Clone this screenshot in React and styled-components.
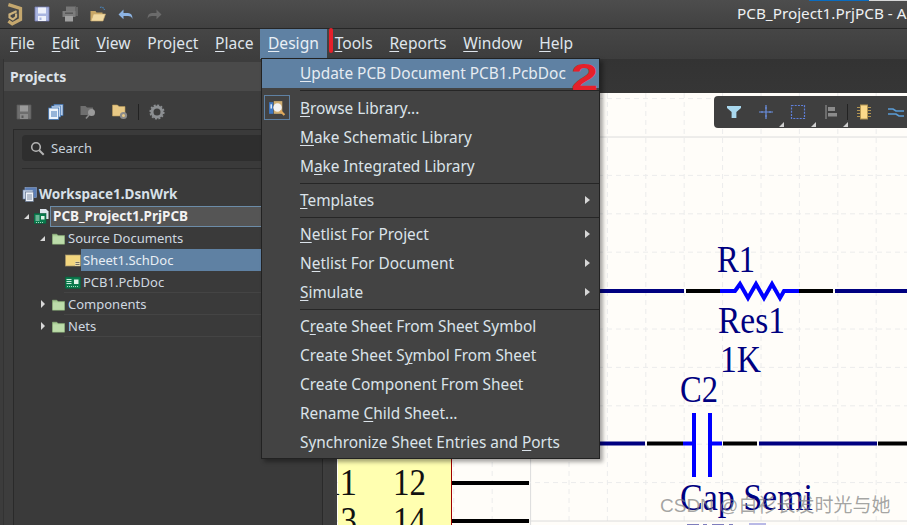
import React from "react";
import styled, { createGlobalStyle } from "styled-components";

const Global = createGlobalStyle`
  html, body { margin: 0; padding: 0; background: #3c3c3c; }
  * { box-sizing: border-box; }
  u { text-decoration-thickness: 1px; text-underline-offset: 2px; }
`;
const FONT = `"Noto Sans", "Open Sans", "Liberation Sans", sans-serif`;

const Page = styled.div`
  position: relative; width: 907px; height: 525px; overflow: hidden;
  display: flex; flex-direction: column; background: #3c3c3c;
  font-family: ${FONT}; color: #dfe5ec;
`;
const TitleBar = styled.header`
  position: relative; height: 29px; flex: none; display: flex; align-items: center;
  padding-left: 6px; gap: 12px; border-bottom: 1px solid #262626;
  background: linear-gradient(#4d4d4d, #414141);
`;
const Progress = styled.div`
  position: absolute; top: 0; right: 0; width: 98px; height: 1px;
  background: linear-gradient(90deg, #0a6cc0 61%, #d8d8d8 61%);
`;
const Slot = styled.span`
  width: 16px; height: 16px; flex: none; display: block;
  svg { display: block; width: 100%; height: 100%; overflow: visible; }
`;
const Title = styled.div`
  position: absolute; left: 737px; top: 3px; font-size: 15.3px; white-space: nowrap; color: #eef0f2;
`;
const MenuBar = styled.nav`
  height: 30px; flex: none; display: flex; padding-left: 1.6px;
  background: linear-gradient(#464646, #3d3d3d);
`;
const MenuItem = styled.div`
  height: 30px; padding: 0 8.4px; font-size: 15.6px; line-height: 29px; white-space: nowrap;
  background: ${p => (p.$active ? "#5f81a3" : "transparent")};
  ${p => p.$active && "margin: 0 -1px 0 -2px; padding-left: 8px; color:#e9eff5;"}
`;
const Body = styled.div`flex: 1; display: flex; min-height: 0;`;
const Panel = styled.aside`
  width: 322px; flex: none; margin-left: 3px; display: flex; flex-direction: column;
  border-left: 1px solid #333; border-right: 2px solid #3e3e3e; background: #3d3d3d;
  padding-top: 3px;
`;
const PanelHead = styled.div`
  height: 29px; flex: none; background: #4a4a4a; padding-left: 6px;
  font-size: 14px; font-weight: 700; line-height: 30px; color: #dde3e9;
`;
const PanelTools = styled.div`
  height: 38px; flex: none; display: flex; align-items: center; padding: 4px 0 0 12px; gap: 16px;
`;
const ToolSep = styled.span`width: 1px; height: 16px; background: #222; margin: 0 -6px;`;
const Frame = styled.div`
  flex: 1; margin-left: 9px; padding: 5px 0 0 8px; background: #3a3a3a;
  border-left: 1px solid #2a2a2a; border-top: 1px solid #2a2a2a; border-right: 1px solid #2a2a2a;
`;
const Search = styled.div`
  height: 26px; display: flex; align-items: center; gap: 6px; padding-left: 8px;
  background: #2e2e2e; border-radius: 4px; font-size: 13px; color: #c8d2dc;
  svg { width: 15px; height: 15px; }
`;
const Rule = styled.div`height: 1px; background: #2c2c2c; margin: 7px 0 14px;`;
const Tree = styled.div`display: flex; flex-direction: column;`;
const Row = styled.div`
  position: relative; height: 22px; display: flex; align-items: center; padding-left: ${p => p.$indent}px;
  font-size: 13px; white-space: nowrap; color: #cfd8e0;
  ${p => p.$rule && `&::after { content: ""; position: absolute; left: 42px; right: 0; bottom: 0; height: 1px; background: #444; }`}
`;
const Arrow = styled.span`
  width: 0; height: 0; flex: none; margin-right: ${p => p.$mr ?? 5}px;
  ${p => p.$open
    ? "border-left: 5px solid transparent; border-bottom: 5px solid #d8d8d8;"
    : "border-left: 4px solid #d8d8d8; border-top: 4px solid transparent; border-bottom: 4px solid transparent;"}
`;
const TreeIcon = styled.span`
  width: ${p => p.$w ?? 15}px; height: 15px; flex: none; display: block; margin-right: ${p => p.$mr ?? 2}px;
  svg { width: 100%; height: 100%; display: block; }
`;
const Bold = styled.span`font-weight: 700; font-size: 13.5px; color: #d7e0e8;`;
const ProjName = styled.span`
  flex: 1; height: 21px; padding-left: 2px; line-height: 19px; font-weight: 700; font-size: 13.5px; color: #f2f2f2;
  background: #555; border: 1px solid #6c8ca8; border-right: 0;
`;
const SelName = styled.span`
  flex: 1; height: 22px; padding-left: 2px; line-height: 22px; background: #5f81a3; color: #e8eef4;
`;
const Doc = styled.main`flex: 1; display: flex; flex-direction: column; min-width: 0;`;
const Tabs = styled.div`height: 34px; flex: none; background: linear-gradient(#333, #363636);`;
const DocRow = styled.div`flex: 1; display: flex; min-height: 0;`;
const Strip = styled.div`width: 12px; flex: none; background: #3d3d3d; border-right: 3px solid #3f3f3f;`;
const Canvas = styled.section`position: relative; flex: 1; background: #fffdf9; overflow: hidden;`;
const Sheet = styled.svg`
  position: absolute; left: 0; top: 0; width: 570px; height: 432px; display: block;
  font-family: "Liberation Serif", serif;
`;
const Watermark = styled.div`
  position: absolute; left: 323px; top: 400px; font-size: 19px; line-height: 26px; white-space: nowrap;
  font-family: "Liberation Sans", "Noto Sans CJK SC", sans-serif; color: rgba(125,125,125,.7);
`;
const FloatBar = styled.div`
  position: absolute; left: 377px; top: 3px; width: 220px; height: 32px; display: flex; align-items: center;
  padding-left: 12px; gap: 16px; background: #3f3f3f; border-radius: 4px;
`;
const FloatTool = styled.span`
  position: relative; width: 16px; height: 16px; flex: none; display: block;
  svg { width: 100%; height: 100%; display: block; }
  ${p => p.$corner && `&::after { content: ""; position: absolute; right: -10px; bottom: -7px; width: 0; height: 0;
    border-left: 5px solid transparent; border-bottom: 5px solid #cfcfcf; }`}
`;
const FloatSep = styled.span`width: 1px; height: 16px; background: #222; margin: 0 -8px 0 -7px;`;

const Menu = styled.div`
  position: absolute; left: 261px; top: 58px; width: 339px; padding: 0 0 1px; background: #434343;
  border: 1px solid #222; box-shadow: 3px 3px 4px rgba(0,0,0,.35);
`;
const MRow = styled.div`
  position: relative; height: 29px; padding-left: 38px; font-size: 15.4px; line-height: 30px; white-space: nowrap;
  color: #dbe3ea; background: ${p => (p.$hot ? "#5f81a3" : "transparent")};
  ${p => p.$hot && "color:#e6ecf2;"}
`;
const MSep = styled.div`
  height: ${p => (p.$first ? 6 : 5)}px; padding-top: 2px;
  &::after { content: ""; display: block; margin-left: 38px; height: 1px; background: #262626; }
`;
const Sub = styled.span`
  position: absolute; right: 9px; top: 10px; width: 0; height: 0;
  border-left: 5px solid #d6d6d6; border-top: 4.5px solid transparent; border-bottom: 4.5px solid transparent;
`;
const BrowseIcon = styled.span`
  position: absolute; left: 2px; top: 1px; width: 26px; height: 25px; display: flex; align-items: center; justify-content: center;
  border: 1px solid #5f81a3;
  svg { width: 18px; height: 18px; }
`;
const RedOne = styled.div`position: absolute; left: 329px; top: 28px; width: 4px; height: 25px; border-radius: 2px; background: #e6202a;`;
const RedTwo = styled.div`
  position: absolute; left: 571px; top: 58px; font-family: "Liberation Sans", sans-serif; font-size: 36px; line-height: 40px; font-weight: 700;
  color: #e6202a; transform: scaleX(1.35); transform-origin: left center;
`;

function Label({ s }) {
  const i = s.indexOf("&");
  if (i < 0) return s;
  return <>{s.slice(0, i)}<u>{s[i + 1]}</u>{s.slice(i + 2)}</>;
}

const Floppy = ({ c = "#a9b5e0", b = "#eef1fb" }) => (
  <svg viewBox="0 0 16 16"><path d="M1 1h14v14H1z" fill={c} stroke="#7a7fb5" strokeWidth=".8"/><rect x="4" y="1.5" width="8" height="6" fill={b}/><rect x="4" y="10" width="8" height="5" fill={b}/><rect x="5.5" y="11.5" width="2" height="2.5" fill={c}/></svg>
);
const GFloppy = () => (
  <svg viewBox="0 0 16 16"><path d="M1 1h14v14H1z" fill="#6e6e6e" stroke="#5a5a5a" strokeWidth=".8"/><rect x="4" y="1.5" width="8" height="6" fill="#9a9a9a"/><rect x="4" y="10" width="8" height="5" fill="#8c8c8c"/><rect x="5.5" y="11.5" width="2" height="2.5" fill="#5a5a5a"/></svg>
);
const Logo = () => (
  <svg viewBox="0 0 16 20" style={{ height: 22, width: 18, marginTop: -3 }}>
    <path d="M2 1.5L13 5v10l-7.5 4L2 16.5" fill="none" stroke="#c4a76e" strokeWidth="3"/>
    <path d="M9.5 7.5L3 10.5v2.5l3 2 3-2.5V9.5" fill="none" stroke="#cdb27c" strokeWidth="2"/>
  </svg>
);
const Print = () => (
  <svg viewBox="0 0 16 16"><rect x="4" y="0.5" width="10" height="5" fill="#777"/><rect x="13" y="1" width="3" height="9" fill="#666"/><rect x="0.5" y="5" width="13" height="6" fill="#7d7d7d"/><rect x="3" y="10" width="8" height="5.5" fill="#a0a0a0"/><rect x="3" y="6.5" width="8" height="1.4" fill="#555"/></svg>
);
const OpenFolder = () => (
  <svg viewBox="0 0 16 16"><path d="M0.5 5h5l1 1.5h6v2H3.5L1.5 15h-1z" fill="#c8a767"/><path d="M3.5 8h12l-2.5 7H1z" fill="#f0d9a2" stroke="#c9aa6d" strokeWidth=".6"/><path d="M10 1.5c2-1 4 .5 4.5 2.5" fill="none" stroke="#4a83b8" strokeWidth="1.2" strokeDasharray="1.6 .8"/></svg>
);
const Undo = ({ c }) => (
  <svg viewBox="0 0 16 16"><path d="M5.5 7H10c3 0 4.5 2 4.5 6-1-2.4-2.5-3-4.5-3H5.5v3.2L.5 8.4l5-5z" fill={c}/></svg>
);
const Redo = ({ c }) => (
  <svg viewBox="0 0 16 16" style={{ transform: "scaleX(-1)" }}><path d="M5.5 7H10c3 0 4.5 2 4.5 6-1-2.4-2.5-3-4.5-3H5.5v3.2L.5 8.4l5-5z" fill={c}/></svg>
);
const Docs = () => (
  <svg viewBox="0 0 16 16"><rect x="6" y="0.5" width="9" height="11" fill="#b9cde6" stroke="#3f74b5" strokeWidth=".7"/><rect x="3.5" y="2" width="9" height="11" fill="#d4e2f3" stroke="#3f74b5" strokeWidth=".7"/><rect x="0.7" y="4" width="10" height="11.5" fill="#eef4fb" stroke="#3f74b5" strokeWidth=".8"/><path d="M3 8h6M3 10h6M3 12h6" stroke="#3f74b5"/></svg>
);
const FolderSearch = () => (
  <svg viewBox="0 0 16 16"><path d="M0.5 2h5l1.5 1.5h6V11H.5z" fill="#6f6f6f"/><circle cx="11.5" cy="8.5" r="3.5" fill="#9a9a9a"/><path d="M9 11l-3 3.5" stroke="#8a8a8a" strokeWidth="1.6"/></svg>
);
const FolderGear = () => (
  <svg viewBox="0 0 16 16"><path d="M0.5 1h5l1.5 1.5h6V12H.5z" fill="#e8c985" stroke="#b99a5c" strokeWidth=".6"/><circle cx="11.5" cy="11.5" r="3.6" fill="#8b8b8b"/><circle cx="11.5" cy="11.5" r="1.5" fill="#e8c985"/></svg>
);
const Gear = () => (
  <svg viewBox="0 0 16 16"><circle cx="8" cy="8" r="5" fill="none" stroke="#8c8f92" strokeWidth="3"/><circle cx="8" cy="8" r="6.8" fill="none" stroke="#8c8f92" strokeWidth="1.6" strokeDasharray="2 1.56"/></svg>
);
const Mag = () => (
  <svg viewBox="0 0 15 15"><circle cx="6" cy="6" r="4.3" fill="none" stroke="#b4b4b4" strokeWidth="1.6"/><path d="M9.2 9.2l4.5 4.5" stroke="#b4b4b4" strokeWidth="2"/></svg>
);
const Workspace = () => (
  <svg viewBox="0 0 15 15"><rect x="3" y="0.5" width="11.5" height="10" fill="#5c7fb8" stroke="#8ea6cc" strokeWidth=".6"/><rect x="1" y="3" width="10" height="9" fill="#c6d3e6" stroke="#6d86ae" strokeWidth=".6"/><rect x="3.5" y="5" width="8" height="9.5" fill="#eef2f8" stroke="#60738f" strokeWidth=".7"/><path d="M5 8h5M5 10h5M5 12h5" stroke="#60738f" strokeWidth=".8"/></svg>
);
const ProjIcon = () => (
  <svg viewBox="0 0 15 15"><path d="M6 0h6l2.5 2.5V10H6z" fill="#dfe6ee"/><rect x="0" y="4.5" width="12" height="10" fill="#0a7a4d" stroke="#0c5d3c" strokeWidth=".6"/><path d="M1.5 7h4M1.5 9h4M1.5 11h4" stroke="#c9eedd"/><rect x="7" y="7" width="3.5" height="3.5" fill="#dff5ea"/><path d="M2 13.5h8" stroke="#a5dcc2" strokeDasharray="1 1"/></svg>
);
const Folder = () => (
  <svg viewBox="0 0 15 15"><path d="M0.5 2.5h5L7 4h7.5v10H.5z" fill="#a9ce96" stroke="#8eb57c" strokeWidth=".6"/><rect x="1" y="5" width="13" height="8.5" fill="#bcdcaa"/></svg>
);
const SchIcon = () => (
  <svg viewBox="0 0 16 15"><rect x="0.5" y="2" width="15" height="11" fill="#f3d67e" stroke="#a5956a" strokeWidth=".7"/><path d="M10 8.5h5v4.5h-5z" fill="#eadba9"/><path d="M10.5 9.5h4M10.5 11.5h4" stroke="#555" strokeWidth=".8"/></svg>
);
const PcbIcon = () => (
  <svg viewBox="0 0 16 15"><rect x="0.3" y="2" width="15.4" height="11.5" fill="#0b7a4d" stroke="#0b5c3a" strokeWidth=".6"/><path d="M1.5 4.5h5M1.5 6.5h5M1.5 8.5h5" stroke="#c9eedd"/><rect x="9" y="4.5" width="4.5" height="4.5" fill="#dff5ea"/><path d="M2 11.5h12" stroke="#a5dcc2" strokeDasharray="1 1"/></svg>
);
const Browse = () => (
  <svg viewBox="0 0 17 17"><rect x="1" y="3" width="4" height="11" fill="#3e78c4"/><rect x="2.4" y="5" width="1.2" height="4" fill="#fff"/><rect x="5.5" y="2" width="8" height="12" fill="#cfae72"/><circle cx="9" cy="8" r="4" fill="#f2f2f2"/><path d="M11.5 11l4 4" stroke="#e0a85a" strokeWidth="2"/></svg>
);
const Funnel = () => (<svg viewBox="0 0 16 16"><path d="M1 2h14v2l-4.6 4v6H5.6V8L1 4z" fill="#a9d8ee"/></svg>);
const Cross = () => (<svg viewBox="0 0 16 16"><path d="M8 1v14M1 8h14" stroke="#6a8fe0" strokeWidth="1.2"/><path d="M7 4h2M7 12h2M4 7v2M12 7v2" stroke="#6a8fe0"/></svg>);
const DashRect = () => (<svg viewBox="0 0 16 16"><rect x="1.5" y="1.5" width="13" height="13" fill="none" stroke="#5f80dc" strokeWidth="1.2" strokeDasharray="2 1.2"/></svg>);
const Align = () => (<svg viewBox="0 0 16 16"><rect x="3" y="1" width="2" height="14" fill="#6d6d6d"/><rect x="6" y="3" width="7" height="4" fill="#8b8b8b"/><rect x="6" y="9" width="9" height="3.5" fill="#8b8b8b"/></svg>);
const Chip = () => (<svg viewBox="0 0 16 16"><rect x="4.5" y="1" width="7" height="14" fill="#fbd98a" stroke="#b39552"/><path d="M1 3.5h3.5M1 6.5h3.5M1 9.5h3.5M1 12.5h3.5M11.5 3.5H15M11.5 6.5H15M11.5 9.5H15M11.5 12.5H15" stroke="#b39552"/></svg>);
const Wires = () => (<svg viewBox="0 0 16 16"><path d="M0 5h5l3 2h8M0 10h8l3 2h5" fill="none" stroke="#5a9cd6" strokeWidth="1.6"/></svg>);

const MENU = [
  ["&Update PCB Document PCB1.PcbDoc", { hot: true }],
  "first",
  ["&Browse Library...", { icon: true }],
  ["&Make Schematic Library"],
  ["M&ake Integrated Library"],
  null,
  ["&Templates", { sub: true }],
  null,
  ["&Netlist For Project", { sub: true }],
  ["N&etlist For Document", { sub: true }],
  ["&Simulate", { sub: true }],
  null,
  ["C&reate Sheet From Sheet Symbol"],
  ["Create Sheet S&ymbol From Sheet"],
  ["Create Component From Sheet"],
  ["Rename &Child Sheet..."],
  ["Synchronize Sheet Entries and &Ports"],
];
const TOP = ["&File", "&Edit", "&View", "Proje&ct", "&Place", "&Design", "&Tools", "&Reports", "&Window", "&Help"];

const vx = Array.from({ length: 16 }, (_, i) => 338.6 + i * 38.4);
const hy = Array.from({ length: 12 }, (_, i) => 98.6 + i * 38.4);
const NAVY = "#000080", BLUE = "#0000ff", BK = "#000";

const Serif = ({ x, y, len, children, ...rest }) => (
  <text x={x} y={y} textLength={len} lengthAdjust="spacingAndGlyphs" {...rest}>{children}</text>
);

function Schematic() {
  return (
    <Sheet viewBox="337 93 570 432">
      {vx.map(x => <line key={x} x1={x} x2={x} y1="93" y2="525" stroke={Math.abs(x - 530) < 1 ? "#dcdcdc" : "#ececec"} strokeWidth="1" strokeDasharray={Math.abs(x - 530) < 1 ? "" : "5 4"} />)}
      {hy.map(y => <line key={y} x1="337" x2="907" y1={y} y2={y} stroke={Math.abs(y - 137) < 1 || Math.abs(y - 521) < 1 ? "#dcdcdc" : "#ececec"} strokeWidth="1" strokeDasharray={Math.abs(y - 137) < 1 || Math.abs(y - 521) < 1 ? "" : "5 4"} />)}
      <rect x="338" y="440" width="113" height="90" fill="#ffffb0" />
      <line x1="451.5" x2="451.5" y1="440" y2="525" stroke="#a00000" strokeWidth="1" />
      <g fill="#111" fontSize="37">
        <Serif x="324" y="495" len="33">11</Serif><Serif x="393" y="495" len="33">12</Serif>
        <Serif x="324" y="533" len="33">13</Serif><Serif x="393" y="533" len="33">14</Serif>
      </g>
      <g stroke={BK} strokeWidth="4">
        <line x1="452" x2="529" y1="483" y2="483" /><line x1="452" x2="529" y1="521" y2="521" />
        <line x1="686" x2="720" y1="291" y2="291" /><line x1="799" x2="833" y1="291" y2="291" />
        <line x1="647" x2="683" y1="443.5" y2="443.5" /><line x1="723" x2="757" y1="443.5" y2="443.5" />
        <line x1="878" x2="907" y1="443.5" y2="443.5" />
      </g>
      <g stroke={NAVY} strokeWidth="4">
        <line x1="590" x2="684" y1="291" y2="291" /><line x1="835" x2="907" y1="291" y2="291" />
        <line x1="590" x2="645" y1="443.5" y2="443.5" /><line x1="759" x2="877" y1="443.5" y2="443.5" />
      </g>
      <g stroke={BLUE} strokeWidth="4" fill="none">
        <polyline points="720,291 735,291 740,284 748,298 756,284 764,298 772,284 780,298 784,291 799,291" />
        <line x1="683" x2="694" y1="443.5" y2="443.5" /><line x1="710" x2="722" y1="443.5" y2="443.5" />
        <line x1="694" x2="694" y1="413" y2="477" /><line x1="710" x2="710" y1="413" y2="477" />
      </g>
      <g fill={NAVY} fontSize="37">
        <Serif x="717" y="272" len="38">R1</Serif><Serif x="718" y="333" len="67">Res1</Serif><Serif x="720" y="372" len="41">1K</Serif>
        <Serif x="680" y="402" len="38">C2</Serif><Serif x="680" y="510" len="133">Cap Semi</Serif>
      </g>
      <path d="M687 524.5h12M703 524.5h4M712 524.5h12M729 524.5h4" stroke={NAVY} strokeWidth="1" opacity=".5" />
      <rect x="749" y="523" width="17" height="2" fill="#b9b9e6" />
    </Sheet>
  );
}

export default function App() {
  return (
    <Page>
      <Global />
      <TitleBar>
        <Progress />
        <Slot><Logo /></Slot>
        <Slot><Floppy /></Slot>
        <Slot><Print /></Slot>
        <Slot><OpenFolder /></Slot>
        <Slot><Undo c="#8db4e4" /></Slot>
        <Slot><Redo c="#6b6b6b" /></Slot>
        <Title>PCB_Project1.PrjPCB - A</Title>
      </TitleBar>
      <MenuBar>
        {TOP.map(t => <MenuItem key={t} $active={t === "&Design"}><Label s={t} /></MenuItem>)}
      </MenuBar>
      <Body>
        <Panel>
          <PanelHead>Projects</PanelHead>
          <PanelTools>
            <Slot><GFloppy /></Slot>
            <Slot><Docs /></Slot>
            <Slot><FolderSearch /></Slot>
            <Slot><FolderGear /></Slot>
            <ToolSep />
            <Slot><Gear /></Slot>
          </PanelTools>
          <Frame>
            <Search><Mag />Search</Search>
            <Rule />
            <Tree>
              <Row $indent={-2}><TreeIcon><Workspace /></TreeIcon><Bold>Workspace1.DsnWrk</Bold></Row>
              <Row $indent={2}><Arrow $open /><TreeIcon $mr={1}><ProjIcon /></TreeIcon><ProjName>PCB_Project1.PrjPCB</ProjName></Row>
              <Row $indent={18}><Arrow $open $mr={7} /><TreeIcon $w={13} $mr={3}><Folder /></TreeIcon>Source Documents</Row>
              <Row $indent={43}><TreeIcon $w={16} $mr={0}><SchIcon /></TreeIcon><SelName>Sheet1.SchDoc</SelName></Row>
              <Row $indent={43} $rule><TreeIcon $w={16} $mr={2}><PcbIcon /></TreeIcon>PCB1.PcbDoc</Row>
              <Row $indent={19} $rule><Arrow $mr={7} /><TreeIcon $w={13} $mr={3}><Folder /></TreeIcon>Components</Row>
              <Row $indent={19} $rule><Arrow $mr={7} /><TreeIcon $w={13} $mr={3}><Folder /></TreeIcon>Nets</Row>
            </Tree>
          </Frame>
        </Panel>
        <Doc>
          <Tabs />
          <DocRow>
            <Strip />
            <Canvas>
              <Schematic />
              <FloatBar>
                <FloatTool><Funnel /></FloatTool>
                <FloatTool $corner><Cross /></FloatTool>
                <FloatTool $corner><DashRect /></FloatTool>
                <FloatTool $corner><Align /></FloatTool>
                <FloatSep />
                <FloatTool><Chip /></FloatTool>
                <FloatTool><Wires /></FloatTool>
              </FloatBar>
              <Watermark>CSDN @白衫长发时光与她</Watermark>
            </Canvas>
          </DocRow>
        </Doc>
      </Body>
      <Menu>
        {MENU.map((m, i) => (m === null || m === "first") ? <MSep key={i} $first={m === "first"} /> : (
          <MRow key={m[0]} $hot={m[1]?.hot}>
            {m[1]?.icon && <BrowseIcon><Browse /></BrowseIcon>}
            <Label s={m[0]} />
            {m[1]?.sub && <Sub />}
          </MRow>
        ))}
      </Menu>
      <RedOne />
      <RedTwo>2</RedTwo>
    </Page>
  );
}
